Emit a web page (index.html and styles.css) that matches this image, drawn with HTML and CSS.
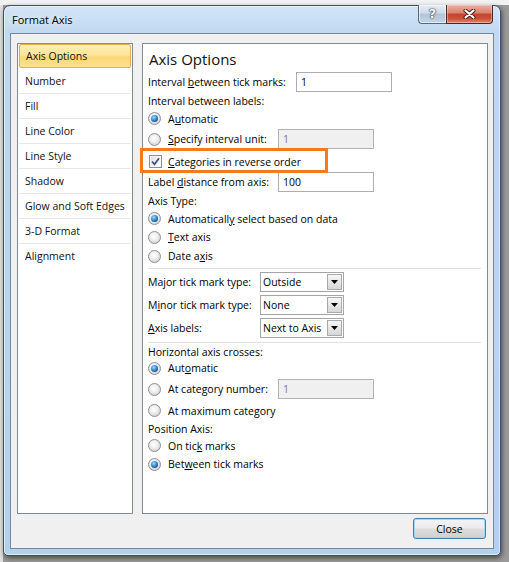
FILE: index.html
```html
<!DOCTYPE html>
<html>
<head>
<meta charset="utf-8">
<title>Format Axis</title>
<link rel="stylesheet" href="styles.css">
</head>
<body>
<div class="window">
  <div class="titlebar">
    <div class="title">Format Axis</div>
    <div class="caption-buttons">
      <div class="cap-help">?</div>
      <div class="cap-close">
        <svg width="13" height="10" viewBox="0 0 13 10"><path d="M2.5 1.5 L10.5 8.5 M10.5 1.5 L2.5 8.5" stroke="#4a1d14" stroke-width="4" stroke-linecap="round" fill="none"/><path d="M2.5 1.5 L10.5 8.5 M10.5 1.5 L2.5 8.5" stroke="#ffffff" stroke-width="2.2" stroke-linecap="round" fill="none"/></svg>
      </div>
    </div>
  </div>
  <div class="client">
    <div class="panels">
      <ul class="nav">
        <li class="sel">Axis Options</li>
        <li>Number</li>
        <li>Fill</li>
        <li>Line Color</li>
        <li>Line Style</li>
        <li>Shadow</li>
        <li>Glow and Soft Edges</li>
        <li>3-D Format</li>
        <li class="last">Alignment</li>
      </ul>
      <div class="content">
        <div class="heading">Axis Options</div>
        <div class="row h20"><span class="lbl w148">Interval <u>b</u>etween tick marks:</span><span class="input wide">1</span></div>
        <div class="row h18">Interval between labels:</div>
        <div class="row h17"><span class="radio on"></span><span>A<u>u</u>tomatic</span></div>
        <div class="row h24"><span class="radio"></span><span class="lbl w110"><u>S</u>pecify interval unit:</span><span class="input dis">1</span></div>
        <div class="row h21 marked">
          <span class="check"><svg width="11" height="11" viewBox="0 0 11 11"><path d="M2 5.5 L4.5 8.3 L9 2.2" stroke="#3d4f8a" stroke-width="1.7" fill="none"/></svg></span>
          <span><u>C</u>ategories in reverse order</span>
          <div class="highlight"></div>
        </div>
        <div class="row h20"><span class="lbl w130">Label <u>d</u>istance from axis:</span><span class="input">100</span></div>
        <div class="row h18">Axis Type:</div>
        <div class="row h17"><span class="radio on"></span><span>Automaticall<u>y</u> select based on data</span></div>
        <div class="row h20"><span class="radio"></span><span><u>T</u>ext axis</span></div>
        <div class="row h18"><span class="radio"></span><span>Date a<u>x</u>is</span></div>
        <div class="sep sep-a"></div>
        <div class="row h20 gap3"><span class="lbl w112">Major tick mark type:</span><span class="select"><span class="sel-text">Outside</span><span class="sel-btn"><svg width="7" height="4" viewBox="0 0 7 4"><path d="M0 0 H7 L3.5 4 Z" fill="#000"/></svg></span></span></div>
        <div class="row h20 gap3"><span class="lbl w112">M<u>i</u>nor tick mark type:</span><span class="select"><span class="sel-text">None</span><span class="sel-btn"><svg width="7" height="4" viewBox="0 0 7 4"><path d="M0 0 H7 L3.5 4 Z" fill="#000"/></svg></span></span></div>
        <div class="row h20"><span class="lbl w112"><u>A</u>xis labels:</span><span class="select"><span class="sel-text">Next to Axis</span><span class="sel-btn"><svg width="7" height="4" viewBox="0 0 7 4"><path d="M0 0 H7 L3.5 4 Z" fill="#000"/></svg></span></span></div>
        <div class="sep sep-b"></div>
        <div class="row h17">Horizontal axis crosses:</div>
        <div class="row h16"><span class="radio on"></span><span>Aut<u>o</u>matic</span></div>
        <div class="row h26"><span class="radio"></span><span class="lbl w110">At cate<u>g</u>ory number:</span><span class="input dis">1</span></div>
        <div class="row h17"><span class="radio"></span><span>At maximum cate<u>g</u>ory</span></div>
        <div class="row h19">Position Axis:</div>
        <div class="row h15"><span class="radio"></span><span>On tic<u>k</u> marks</span></div>
        <div class="row h22"><span class="radio on"></span><span>Bet<u>w</u>een tick marks</span></div>
      </div>
    </div>
    <div class="footer"><button class="dlg-btn">Close</button></div>
  </div>
</div>
</body>
</html>
```

FILE: styles.css
```css
* { box-sizing: border-box; }
html, body { margin: 0; padding: 0; }
body {
  width: 509px;
  height: 562px;
  overflow: hidden;
  padding: 5px 0 0 3px;
  background:
    linear-gradient(#f2f2f2 0, #f2f2f2 5px, transparent 5px),
    linear-gradient(to right, #e0e0e0 0, #e0e0e0 3px, #9a9a9a 3px);
  font-family: "Open Sans", "Noto Sans", sans-serif;
  font-size: 10.5px;
  color: #000;
}

/* window frame */
.window {
  width: 498px;
  height: 551px;
  border: 1px solid #3d4e66;
  border-radius: 7px 7px 5px 5px;
  background: linear-gradient(to bottom, #d3e5f6 0, #c1d8f0 28px, #bcd6f1 120px, #b3d0ef 100%);
  box-shadow: inset 0 0 0 1px rgba(255,255,255,0.55), 1px 2px 5px rgba(0,0,0,0.55);
  padding: 0 6px 6px 6px;
  display: flex;
  flex-direction: column;
}
.titlebar {
  height: 27px;
  display: flex;
  align-items: flex-start;
}
.title {
  margin-top: 6px;
  padding-left: 2px;
  line-height: 16px;
  font-size: 11px;
  color: #000;
  text-shadow: 0 0 6px rgba(255,255,255,0.9);
}
.caption-buttons {
  margin-left: auto;
  margin-right: 1px;
  margin-top: -1px;
  display: flex;
}
.cap-help {
  width: 28px;
  height: 19px;
  border: 1px solid #55677f;
  border-top: none;
  border-right: none;
  border-radius: 0 0 0 4px;
  background: linear-gradient(#e4edf7 0, #cfdbe8 45%, #b3c4d8 50%, #c3d4e8 100%);
  box-shadow: inset 0 0 0 1px rgba(255,255,255,0.55);
  color: #fff;
  font-family: "DejaVu Sans", sans-serif;
  font-weight: bold;
  font-size: 13px;
  line-height: 18px;
  text-align: center;
  text-shadow: 0 0 1px #000, 0 0 2px #233;
}
.cap-close {
  width: 47px;
  height: 19px;
  border: 1px solid #4a2620;
  border-top: none;
  border-radius: 0 0 4px 0;
  background: linear-gradient(#eab0a2 0, #d9806c 45%, #c3432c 50%, #cc5038 75%, #df8a6e 100%);
  box-shadow: inset 0 0 0 1px rgba(255,220,210,0.45);
  display: flex;
  align-items: center;
  justify-content: center;
  padding-bottom: 1px;
}

/* client area */
.client {
  flex: 1;
  border: 1px solid #7a8799;
  background: #f0f0f0;
  padding: 9px 5px 9px 6px;
  display: flex;
  flex-direction: column;
}
.panels {
  height: 471px;
  display: flex;
  gap: 9px;
}

/* navigation list */
.nav {
  width: 116px;
  margin: 0;
  padding: 0;
  list-style: none;
  background: #fff;
  border: 1px solid #838a93;
}
.nav li {
  height: 25px;
  margin: 0 1px;
  padding-left: 6px;
  line-height: 24px;
  border-bottom: 1px solid #e9e9e9;
  color: #111;
  white-space: nowrap;
}
.nav li.sel {
  height: 24px;
  margin-bottom: 1px;
  line-height: 22px;
  border: 1px solid #e2b14f;
  border-radius: 2px;
  background: linear-gradient(#fdeeb5 0, #fde59a 45%, #fcd776 55%, #fde28e 100%);
}
.nav li.last { border-bottom-color: transparent; }

/* content panel */
.content {
  width: 346px;
  background: #fff;
  border: 1px solid #838a93;
  padding: 3px 0 0 5px;
  white-space: nowrap;
}
.heading {
  height: 25px;
  line-height: 25px;
  font-size: 15px;
  color: #111;
  padding-left: 1px;
}
.row {
  display: flex;
  align-items: center;
}
.h15 { height: 15px; }
.h16 { height: 16px; }
.h17 { height: 17px; }
.h18 { height: 18px; }
.h19 { height: 19px; }
.h20 { height: 20px; }
.h21 { height: 21px; }
.h22 { height: 22px; }
.h24 { height: 24px; }
.h26 { height: 26px; }
.gap3 { margin-bottom: 3px; }

.lbl { flex: none; }
.w148 { width: 148px; }
.w130 { width: 130px; }
.w112 { width: 112px; }
.w110 { width: 110px; }

u { text-decoration: underline; text-underline-offset: 1px; }

.input {
  width: 96px;
  height: 20px;
  border: 1px solid #abadb3;
  background: #fff;
  padding-left: 4px;
  line-height: 18px;
}
.input.wide { width: 96px; }
.input.dis {
  background: #f0f0f0;
  border-color: #b4b4b4;
  color: #7a7a7a;
}

.radio {
  flex: none;
  width: 13px;
  height: 13px;
  margin-right: 7px;
  border-radius: 50%;
  border: 1px solid #8f9092;
  background: radial-gradient(circle at 45% 40%, #ffffff 0, #f2f2f2 35%, #d9d9d9 70%, #c4c4c4 100%);
  display: flex;
  align-items: center;
  justify-content: center;
}
.radio.on::after {
  content: "";
  width: 7px;
  height: 7px;
  border-radius: 50%;
  background: radial-gradient(circle at 40% 35%, #a6defa 0, #3d92d6 40%, #15579c 75%, #0c3a72 100%);
}

.check {
  flex: none;
  width: 13px;
  height: 13px;
  margin: 0 6px 0 1px;
  border: 1px solid #8f8f8f;
  background: linear-gradient(135deg, #dcdcdc 0, #f4f4f4 60%, #ffffff 100%);
  box-shadow: inset 0 0 0 1px #f5f5f5;
  display: flex;
  align-items: center;
  justify-content: center;
}

.marked { position: relative; }
.highlight {
  position: absolute;
  left: -8px;
  top: -3px;
  width: 188px;
  height: 25px;
  border: 3px solid #f47a20;
}

.select {
  width: 84px;
  height: 20px;
  border: 1px solid #a5a5a5;
  background: #fff;
  display: flex;
  align-items: center;
  padding-left: 2px;
}
.sel-text { flex: 1; overflow: hidden; }
.sel-btn {
  flex: none;
  width: 15px;
  height: 16px;
  margin-right: 1px;
  border: 1px solid #a9a9a9;
  background: linear-gradient(#f6f6f6 0, #e6e6e6 50%, #d6d6d6 100%);
  display: flex;
  align-items: center;
  justify-content: center;
}

.sep {
  height: 1px;
  background: #e1e1e1;
  margin-right: 6px;
}
.sep-a { margin-top: 3px; margin-bottom: 3px; }
.sep-b { margin-top: 4px; }

/* footer */
.footer {
  margin-top: 4px;
  display: flex;
  justify-content: flex-end;
}
.dlg-btn {
  width: 73px;
  height: 21px;
  margin: 0 2px 0 0;
  padding: 0;
  border: 1px solid #3c7fb1;
  border-radius: 3px;
  background: linear-gradient(#f3f3f3 0, #ececec 48%, #dddddd 52%, #d0d0d0 100%);
  box-shadow: inset 0 0 0 1px rgba(150,215,250,0.85);
  font-family: "Open Sans", "Noto Sans", sans-serif;
  font-size: 10.5px;
  color: #000;
}
```
